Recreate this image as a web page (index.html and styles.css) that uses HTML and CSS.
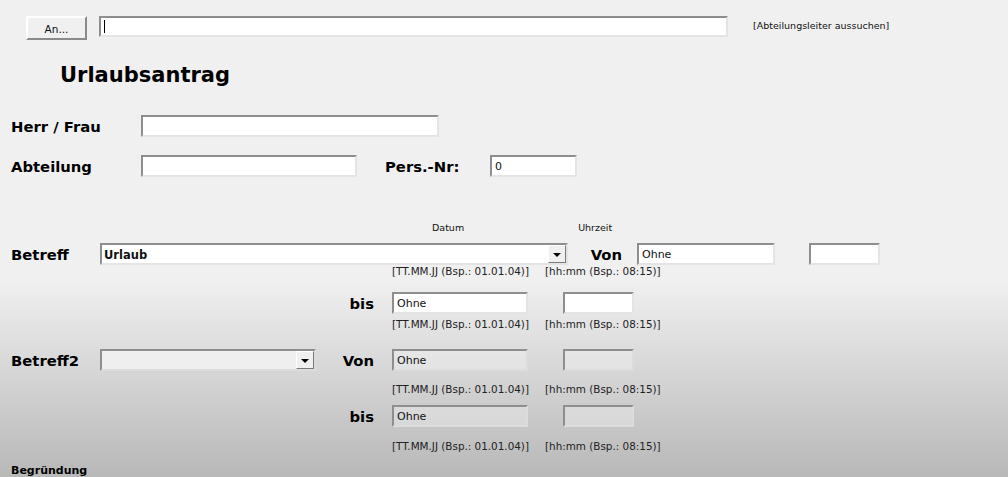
FILE: index.html
```html
<html>
    <head>
        <title>Urlaubsantrag</title>
        <link rel="stylesheet" href="styles.css">
    </head>
    <body>
        <div class="form">
            <div class="row top">
                <button type="button" class="btn">An...</button>
                <div class="field addr"><span class="caret"></span></div>
                <div class="note">[Abteilungsleiter aussuchen]</div>
            </div>

            <h1 class="title">Urlaubsantrag</h1>

            <div class="row herr">
                <div class="label wide">Herr / Frau</div>
                <div class="field name"></div>
            </div>

            <div class="row abt">
                <div class="label wide">Abteilung</div>
                <div class="field dept"></div>
                <div class="label pers">Pers.-Nr:</div>
                <div class="field nr">0</div>
            </div>

            <div class="row heads">
                <span class="head datum">Datum</span>
                <span class="head uhrzeit">Uhrzeit</span>
            </div>

            <div class="row betreff">
                <div class="label">Betreff</div>
                <div class="field select big"><span class="value">Urlaub</span><span class="drop"></span></div>
                <div class="label von1">Von</div>
                <div class="field date">Ohne</div>
                <div class="field time far"></div>
            </div>
            <div class="row hints h1">
                <span class="hint date">[TT.MM.JJ (Bsp.: 01.01.04)]</span>
                <span class="hint">[hh:mm (Bsp.: 08:15)]</span>
            </div>

            <div class="row bis b1">
                <div class="label side">bis</div>
                <div class="field date">Ohne</div>
                <div class="field time"></div>
            </div>
            <div class="row hints h2">
                <span class="hint date">[TT.MM.JJ (Bsp.: 01.01.04)]</span>
                <span class="hint">[hh:mm (Bsp.: 08:15)]</span>
            </div>

            <div class="row betreff2">
                <div class="label">Betreff2</div>
                <div class="field select small off"><span class="value"></span><span class="drop"></span></div>
                <div class="label side von2">Von</div>
                <div class="field date off">Ohne</div>
                <div class="field time off"></div>
            </div>
            <div class="row hints h3">
                <span class="hint date">[TT.MM.JJ (Bsp.: 01.01.04)]</span>
                <span class="hint">[hh:mm (Bsp.: 08:15)]</span>
            </div>

            <div class="row bis b2">
                <div class="label side">bis</div>
                <div class="field date off">Ohne</div>
                <div class="field time off"></div>
            </div>
            <div class="row hints h4">
                <span class="hint date">[TT.MM.JJ (Bsp.: 01.01.04)]</span>
                <span class="hint">[hh:mm (Bsp.: 08:15)]</span>
            </div>

            <div class="begr">Begründung</div>
        </div>
    </body>
</html>
```

FILE: styles.css
```css
html {
    height: 100%;
}

body {
    margin: 0;
    height: 100%;
    overflow: hidden;
    font-family: "DejaVu Sans", Verdana, sans-serif;
    color: #111;
    background: linear-gradient(#f0f0f0 0, #f0f0f0 280px, #b8b8b8 477px);
}

.form {
    display: flex;
    flex-direction: column;
}

.row {
    display: flex;
    align-items: center;
    padding-left: 11px;
}

.label {
    width: 89px;
    font-size: 14.8px;
    font-weight: bold;
    color: #000;
}

.label.wide {
    width: 130px;
}

.field {
    box-sizing: border-box;
    height: 22px;
    background: #fff;
    border: 2px solid;
    border-color: #8e8e8e #e4e4e4 #e4e4e4 #8e8e8e;
    font-size: 11px;
    line-height: 18px;
    padding: 1px 0 0 3px;
    white-space: nowrap;
}

.field.off {
    background: rgba(255, 255, 255, 0.3);
    border-color: #8e8e8e #dcdcdc #dcdcdc #8e8e8e;
}

/* top line */
.top {
    margin-top: 16px;
    padding-left: 26px;
    align-items: flex-start;
    height: 24px;
}

.btn {
    box-sizing: border-box;
    width: 61px;
    height: 24px;
    margin: 0;
    font-family: "DejaVu Sans", sans-serif;
    font-size: 10.5px;
    color: #111;
    background: #f0f0f0;
    border: 2px solid;
    border-color: #fff #8a8a8a #8a8a8a #fff;
    padding: 2px 0 0;
}

.addr {
    width: 629px;
    height: 21px;
    margin-left: 12px;
    padding-top: 0;
}

.caret {
    display: inline-block;
    width: 1px;
    height: 13px;
    background: #000;
    margin-top: 2px;
}

.note {
    margin-left: 25px;
    margin-top: 4px;
    font-size: 9.5px;
}

.title {
    margin: 21px 0 0 60px;
    height: 28px;
    line-height: 28px;
    font-size: 21px;
    font-weight: bold;
    color: #000;
}

.herr {
    margin-top: 26px;
}

.name {
    width: 298px;
}

.abt {
    margin-top: 18px;
}

.dept {
    width: 216px;
}

.label.pers {
    width: 105px;
    margin-left: 28px;
}

.nr {
    width: 87px;
}

.heads {
    margin-top: 44px;
    height: 12px;
    padding-left: 432px;
}

.head {
    font-size: 9.5px;
}

.uhrzeit {
    margin-left: 114px;
}

.betreff {
    margin-top: 10px;
}

.select {
    display: flex;
    justify-content: space-between;
    padding: 0 0 0 2px;
}

.select.big {
    width: 468px;
}

.select.small {
    width: 216px;
}

.select.off {
    background: #efefef;
}

.value {
    font-weight: bold;
    font-size: 11.5px;
    padding-top: 1px;
}

.drop {
    box-sizing: border-box;
    width: 18px;
    height: 18px;
    background: #f0f0f0;
    border: 1px solid;
    border-color: #fff #7a7a7a #7a7a7a #fff;
    position: relative;
}

.drop::after {
    content: "";
    position: absolute;
    left: 4px;
    top: 7px;
    border-left: 4px solid transparent;
    border-right: 4px solid transparent;
    border-top: 4px solid #000;
}

.label.von1 {
    width: 54px;
    text-align: right;
    padding-right: 15px;
}

.label.side {
    box-sizing: border-box;
    width: 381px;
    text-align: right;
    padding-right: 18px;
}

.label.von2 {
    width: 76px;
}

.field.date {
    width: 136px;
}

.betreff .field.date {
    width: 138px;
}

.field.time {
    width: 71px;
    margin-left: 35px;
}

.field.time.far {
    margin-left: 34px;
}

.hints {
    height: 12px;
    padding-left: 392px;
}

.hint {
    font-size: 10.4px;
    color: #222;
}

.hint.date {
    width: 153px;
}

.b1 {
    margin-top: 15px;
}

.h2 {
    margin-top: 4px;
}

.betreff2 {
    margin-top: 19px;
}

.h3 {
    margin-top: 12px;
}

.b2 {
    margin-top: 10px;
}

.h4 {
    margin-top: 13px;
}

.begr {
    margin-top: 13px;
    padding-left: 11px;
    height: 12px;
    line-height: 12px;
    font-size: 11px;
    font-weight: bold;
    color: #000;
}
```
